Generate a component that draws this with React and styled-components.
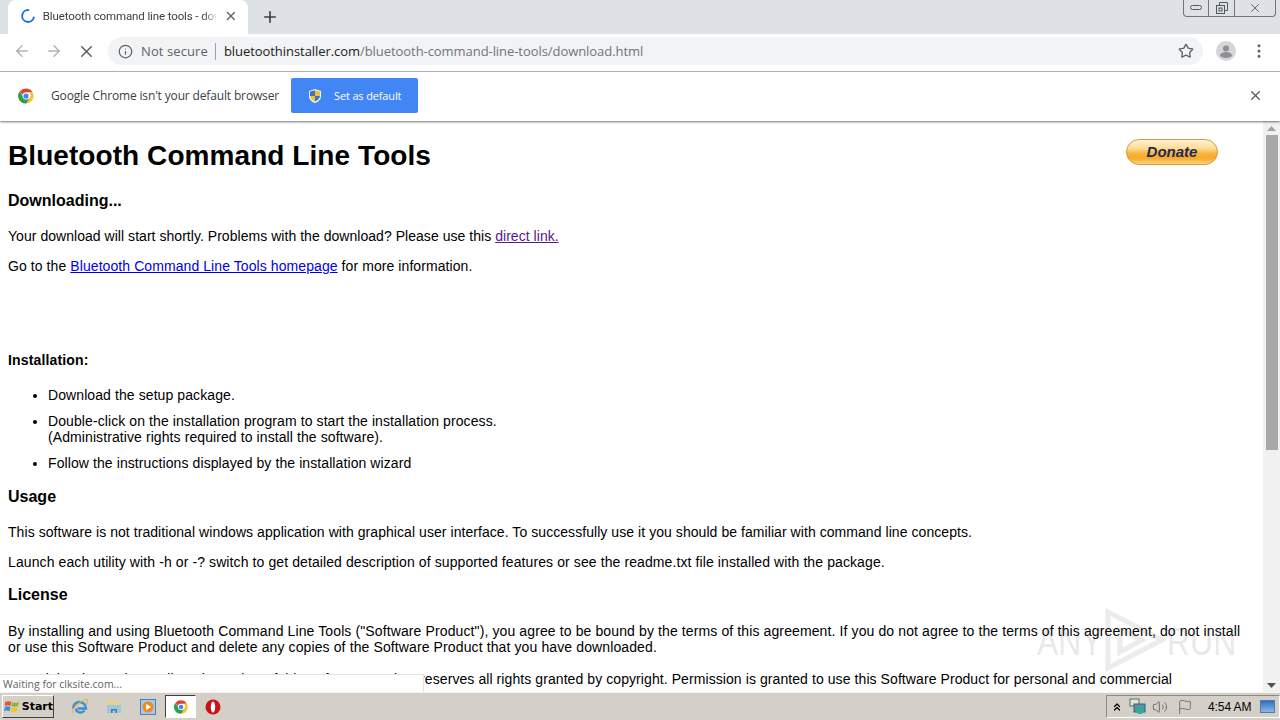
import styled, { createGlobalStyle } from 'styled-components';
import { ArrowLeft, ArrowRight, X, Plus, Info, Star, MoreVertical, Flag, ChevronsUp, Volume2 } from 'lucide-react';

const GlobalStyle = createGlobalStyle`
  html, body {
    margin: 0;
    padding: 0;
    width: 1280px;
    height: 720px;
    overflow: hidden;
    background: #fff;
    font-family: "Liberation Sans", Arial, sans-serif;
  }
`;

const Shell = styled.div`
  width: 1280px;
  height: 720px;
  display: flex;
  flex-direction: column;
  position: relative;
  overflow: hidden;
`;

const TabStrip = styled.div`
  height: 34px;
  flex: none;
  background: #dee1e6;
  display: flex;
  align-items: flex-end;
  padding-left: 8px;
`;

const Tab = styled.div`
  width: 240px;
  height: 34px;
  box-sizing: border-box;
  background: #fff;
  border-radius: 8px 8px 0 0;
  display: flex;
  align-items: center;
  padding: 0 10px 2px 12px;
  font-family: Roboto, sans-serif;
  font-size: 11.5px;
  letter-spacing: -0.12px;
  color: #3c4043;
`;

const TabTitle = styled.span`
  width: 176px;
  margin-left: 7px;
  white-space: nowrap;
  overflow: hidden;
  -webkit-mask-image: linear-gradient(to right, #000 160px, transparent 176px);
  mask-image: linear-gradient(to right, #000 160px, transparent 176px);
`;

const TabClose = styled(X)`
  margin-left: 8px;
  color: #5f6368;
`;

const NewTab = styled(Plus)`
  margin: 0 0 8px 13px;
  color: #3c4043;
`;

const WindowControls = styled.div`
  margin: 0 4px auto auto;
  height: 17px;
  width: 93px;
  box-sizing: border-box;
  display: flex;
  border: 1px solid #70757c;
  border-top: none;
  border-radius: 0 0 4px 4px;
`;

const WindowButton = styled.div`
  width: ${(p) => p.$w}px;
  display: flex;
  align-items: center;
  justify-content: center;
  color: #53585f;
  border-right: ${(p) => (p.$last ? 'none' : '1px solid #70757c')};
`;

const Toolbar = styled.div`
  height: 38px;
  flex: none;
  box-sizing: border-box;
  background: #fff;
  border-bottom: 1px solid #b6b8bb;
  display: flex;
  align-items: center;
  padding: 0 12px 3px 6px;
`;

const NavButton = styled.div`
  width: 32px;
  display: flex;
  justify-content: center;
  color: ${(p) => p.$color};
`;

const Omnibox = styled.div`
  width: 1095px;
  height: 28px;
  margin-left: 6px;
  box-sizing: border-box;
  padding: 0 9px 0 10px;
  background: #f1f3f4;
  border-radius: 14px;
  display: flex;
  align-items: center;
  font-family: "Open Sans", sans-serif;
  font-size: 13px;
  letter-spacing: -0.06px;
  white-space: nowrap;
`;

const NotSecure = styled.span`
  color: #5f6368;
  margin-left: 8px;
  padding-right: 7px;
  border-right: 1px solid #9aa0a6;
  line-height: 17px;
  letter-spacing: 0.1px;
`;

const Domain = styled.span`
  margin-left: 8px;
  color: #202124;
`;

const Path = styled.span`
  color: #70757a;
`;

const StarIcon = styled(Star)`
  margin-left: auto;
  color: #5f6368;
`;

const Avatar = styled.svg`
  margin-left: 13px;
  flex: none;
`;

const MenuDots = styled(MoreVertical)`
  margin-left: 14px;
  color: #5f6368;
`;

const InfoBar = styled.div`
  height: 49px;
  flex: none;
  box-sizing: border-box;
  background: #fff;
  display: flex;
  align-items: center;
  padding: 0 17px 2px 17px;
  box-shadow: 0 1px 2px rgba(0, 0, 0, 0.55);
  position: relative;
  z-index: 1;
  font-family: "Open Sans", sans-serif;
  font-size: 12px;
  letter-spacing: -0.15px;
  color: #3c4043;
`;

const InfoText = styled.span`
  margin-left: 16px;
`;

const DefaultButton = styled.div`
  margin-left: 12px;
  width: 127px;
  height: 35px;
  background: #4285f4;
  border-radius: 2px;
  display: flex;
  align-items: center;
  padding-left: 16px;
  box-sizing: border-box;
  color: #fff;
  font-size: 11px;
`;

const DefaultLabel = styled.span`
  margin-left: 11px;
`;

const InfoClose = styled(X)`
  margin-left: auto;
  color: #5f6368;
`;

const Viewport = styled.div`
  flex: 1;
  min-height: 0;
  display: flex;
  position: relative;
  overflow: hidden;
`;

const Page = styled.main`
  flex: 1;
  min-width: 0;
  padding: 0 8px;
  overflow: hidden;
  color: #000;
  font-size: 14px;
`;

const Header = styled.header`
  display: flex;
  justify-content: space-between;
  align-items: flex-start;
  padding: 18px 37px 0 0;
`;

const Title = styled.h1`
  margin: 1px 0 0;
  font-size: 28px;
  line-height: 32px;
  letter-spacing: 0.07px;
`;

const Donate = styled.div`
  width: 92px;
  height: 26px;
  box-sizing: border-box;
  border: 1px solid #d9992f;
  border-radius: 13px;
  background: linear-gradient(#fff3d6 0%, #fedc93 35%, #f9b53f 55%, #f7a928 75%, #fcd27f 100%);
  text-align: center;
  font-size: 15px;
  font-weight: bold;
  font-style: italic;
  line-height: 24px;
  color: #1d2a55;
`;

const Heading = styled.h2`
  margin: ${(p) => p.$top}px 0 0;
  font-size: 16px;
  line-height: 18px;
`;

const Para = styled.p`
  margin: ${(p) => p.$top || 14}px 0 0;
  line-height: 16px;
  letter-spacing: ${(p) => p.$track || 0.08}px;
`;

const Strong = styled.p`
  margin: 78px 0 0;
  font-weight: bold;
  line-height: 16px;
  letter-spacing: 0.15px;
`;

const Steps = styled.ul`
  margin: 19px 0 0;
  padding-left: 40px;
  letter-spacing: 0.09px;
`;

const Step = styled.li`
  line-height: 16px;
  margin-bottom: 10px;
`;

const PageLink = styled.a`
  color: ${(p) => (p.$visited ? '#551a8b' : '#0000ee')};
  text-decoration: underline;
`;

const Scrollbar = styled.div`
  width: 17px;
  flex: none;
  background: #f1f1f1;
  display: flex;
  flex-direction: column;
  align-items: center;
`;

const ScrollArrow = styled.div`
  height: 14px;
  flex: none;
  display: flex;
  align-items: center;
  justify-content: center;
`;

const ScrollThumb = styled.div`
  width: 12px;
  height: 315px;
  background: #a8a8a8;
`;

const ScrollSpace = styled.div`
  flex: 1;
`;

const StatusBubble = styled.div`
  position: absolute;
  left: 0;
  bottom: 0;
  width: 424px;
  height: 18px;
  box-sizing: border-box;
  background: #fff;
  border-top: 1px solid #e3e3e3;
  border-right: 1px solid #e3e3e3;
  padding-left: 3px;
  font-family: "Open Sans", sans-serif;
  font-size: 10.5px;
  line-height: 18px;
  color: #5f6368;
`;

const Watermark = styled.div`
  position: absolute;
  left: 1037px;
  top: 487px;
  width: 196px;
  height: 64px;
  display: flex;
  align-items: center;
  justify-content: space-between;
  font-size: 39px;
  color: rgba(120, 120, 120, 0.16);
  pointer-events: none;
`;

const WatermarkWord = styled.span`
  display: inline-block;
  width: 66px;
  transform: scaleX(0.82);
  transform-origin: left center;
  margin-top: 4px;
`;

const Taskbar = styled.footer`
  height: 28px;
  flex: none;
  box-sizing: border-box;
  background: #d4d0c8;
  border-top: 1px solid #f4f3ef;
  display: flex;
  align-items: center;
  padding-left: 2px;
  font-family: "Liberation Sans", sans-serif;
  font-size: 12px;
  color: #000;
`;

const StartButton = styled.div`
  width: 52px;
  height: 23px;
  box-sizing: border-box;
  border: 1px solid;
  border-color: #fff #404040 #404040 #fff;
  display: flex;
  align-items: center;
  gap: 1px;
  padding-left: 1px;
  font-family: "DejaVu Sans", sans-serif;
  font-size: 11px;
  font-weight: bold;
`;

const Launcher = styled.div`
  width: ${(p) => (p.$active ? 31 : 34)}px;
  height: 23px;
  box-sizing: border-box;
  display: flex;
  align-items: center;
  justify-content: center;
  background: ${(p) => (p.$active ? '#fff' : 'transparent')};
  border: ${(p) => (p.$active ? '1px solid' : 'none')};
  border-color: #404040 #fff #fff #404040;
`;

const LauncherGroup = styled.div`
  margin-left: 9px;
  display: flex;
  align-items: center;
`;

const Tray = styled.div`
  margin-left: auto;
  height: 23px;
  width: 174px;
  box-sizing: border-box;
  border: 1px solid;
  border-color: #8c8a85 #fff #fff #8c8a85;
  display: flex;
  align-items: center;
  padding-left: 2px;
`;

const TrayIcon = styled.div`
  display: flex;
  margin-left: ${(p) => p.$gap}px;
  color: #5d5d5d;
`;

const Clock = styled.span`
  margin-left: 15px;
  width: 42px;
  white-space: nowrap;
  letter-spacing: -0.1px;
`;

const ShowDesktop = styled.div`
  margin-left: 10px;
  width: 15px;
  height: 13px;
  background: linear-gradient(#2f6fc0, #8cb6e6);
  border: 1px solid #4a7cb5;
  box-sizing: border-box;
`;

function ChromeLogo({ size = 18 }) {
  return (
    <svg width={size} height={size} viewBox="0 0 48 48">
      <path d="M24 4a20 20 0 0 1 17.3 10H24a10 10 0 0 0-9.5 6.9L7.7 11.4A20 20 0 0 1 24 4z" fill="#db4437" />
      <path d="M41.3 14A20 20 0 0 1 25 44l8.2-14.8A10 10 0 0 0 32 14z" fill="#fbc02d" />
      <path d="M25 44A20 20 0 0 1 7.7 11.4l8.6 15A10 10 0 0 0 33.2 29.2z" fill="#2e9e4f" />
      <circle cx="24" cy="24" r="9" fill="#fff" />
      <circle cx="24" cy="24" r="7" fill="#4285f4" />
    </svg>
  );
}

function ShieldIcon() {
  return (
    <svg width="16" height="16" viewBox="0 0 16 16">
      <path d="M8 1l6 2v5c0 3.5-2.6 5.8-6 7-3.4-1.200-6-3.500-6-7V3z" fill="#f3f3e6" />
      <path d="M8 2.200V8H3V3.600z" fill="#3f72c8" />
      <path d="M8 8h5c-.2 2.600-2.300 4.400-5 5.600z" fill="#3f72c8" />
      <path d="M8 2.200l5 1.400V8H8z" fill="#f2c230" />
      <path d="M8 8v5.600C5.300 12.400 3.200 10.600 3 8z" fill="#f2c230" />
    </svg>
  );
}

function Spinner() {
  return (
    <svg width="16" height="16" viewBox="0 0 16 16" fill="none">
      <path d="M8.500 2A6 6 0 1 0 14 9.500" stroke="#1a73e8" strokeWidth="2" strokeLinecap="round" />
    </svg>
  );
}

function WindowsFlag() {
  return (
    <svg width="18" height="17" viewBox="0 0 18 17">
      <path d="M1 4c2-1.500 4-1.500 7-.5L7 8C4.500 7 3 7 1 8z" fill="#e8562a" />
      <path d="M9 3.800c2.500 1 4.500 1 7 0L15 8c-2.500 1-4.500 1-7 0z" fill="#7fba3a" />
      <path d="M1 9c2-1 3.500-1 6 0l-1 4.500c-2.500-1-4-1-6 0z" fill="#3d8fdc" />
      <path d="M8 9.200c2.500 1 4.500 1 7 0l-1 4.500c-2.500 1-4.500 1-7 0z" fill="#f5c02c" />
    </svg>
  );
}

function IeIcon() {
  return (
    <svg width="18" height="18" viewBox="0 0 18 18" fill="none">
      <path d="M2 10.500a6.500 6.500 0 0 1 13 0H6.500" stroke="#3a8fd6" strokeWidth="2.400" />
      <path d="M5 10.500c0 4 5.500 5.500 8.500 2" stroke="#3a8fd6" strokeWidth="2.400" />
      <path d="M2 15C0 11 10 2 15.500 1.500c1.500 0 1.500 3-.5 5" stroke="#e0b64a" strokeWidth="1.200" />
    </svg>
  );
}

function FolderIcon() {
  return (
    <svg width="16" height="16" viewBox="0 0 16 16">
      <path d="M2 2h5l1 2h6v3H2z" fill="#f0d070" />
      <path d="M1 6h14v8H1z" fill="#9fc6dc" />
      <path d="M5 14v-4h6v4h-1.500v-2.500h-3V14z" fill="#3f80ae" />
    </svg>
  );
}

function MediaIcon() {
  return (
    <svg width="16" height="16" viewBox="0 0 16 16">
      <rect x="0.500" y="0.500" width="15" height="15" fill="#a9c8e8" stroke="#4a80c0" />
      <circle cx="8" cy="8" r="5.500" fill="#ee8a1c" />
      <path d="M6.200 5l5 3-5 3z" fill="#fff" />
    </svg>
  );
}

function OperaIcon() {
  return (
    <svg width="16" height="16" viewBox="0 0 16 16">
      <circle cx="8" cy="8" r="7.500" fill="#cc1016" />
      <ellipse cx="8" cy="8" rx="2.200" ry="5.500" fill="#fff" />
    </svg>
  );
}

function NetworkIcon() {
  return (
    <svg width="18" height="17" viewBox="0 0 18 17">
      <rect x="1" y="1" width="9" height="7" fill="#dfe8d8" stroke="#5b6b6b" />
      <rect x="5" y="6" width="11" height="8" fill="#5d8fa8" stroke="#3b5f70" />
      <circle cx="11" cy="12" r="4" fill="#35a8a0" />
    </svg>
  );
}

export default function App() {
  return (
    <Shell>
      <GlobalStyle />
      <TabStrip>
        <Tab>
          <Spinner />
          <TabTitle>Bluetooth command line tools - download</TabTitle>
          <TabClose size={14} strokeWidth={2.4} />
        </Tab>
        <NewTab size={18} strokeWidth={2.2} />
        <WindowControls>
          <WindowButton $w={25}>
            <svg width="12" height="6" viewBox="0 0 12 6" fill="none">
              <rect x="0.500" y="0.500" width="11" height="4" rx="2" stroke="currentColor" />
            </svg>
          </WindowButton>
          <WindowButton $w={25}>
            <svg width="12" height="12" viewBox="0 0 12 12" fill="none" stroke="currentColor">
              <rect x="0.500" y="3.500" width="8" height="8" />
              <path d="M3.500 3V.5h8v8H9" />
              <rect x="3" y="6" width="3" height="3" />
            </svg>
          </WindowButton>
          <WindowButton $w={41} $last>
            <X size={14} strokeWidth={1.5} />
          </WindowButton>
        </WindowControls>
      </TabStrip>

      <Toolbar>
        <NavButton $color="#b0b3b8"><ArrowLeft size={18} /></NavButton>
        <NavButton $color="#b0b3b8"><ArrowRight size={18} /></NavButton>
        <NavButton $color="#5f6368"><X size={19} /></NavButton>
        <Omnibox>
          <Info size={15} color="#5f6368" />
          <NotSecure>Not secure</NotSecure>
          <Domain>bluetoothinstaller.com<Path>/bluetooth-command-line-tools/download.html</Path></Domain>
          <StarIcon size={16} />
        </Omnibox>
        <Avatar width="20" height="20" viewBox="0 0 20 20">
          <circle cx="10" cy="10" r="10" fill="#d4d5d7" />
          <circle cx="10" cy="7.500" r="3" fill="#8d8f92" />
          <ellipse cx="10" cy="14" rx="6" ry="3" fill="#8d8f92" />
        </Avatar>
        <MenuDots size={18} />
      </Toolbar>

      <InfoBar>
        <ChromeLogo />
        <InfoText>Google Chrome isn't your default browser</InfoText>
        <DefaultButton>
          <ShieldIcon />
          <DefaultLabel>Set as default</DefaultLabel>
        </DefaultButton>
        <InfoClose size={15} strokeWidth={2.4} />
      </InfoBar>

      <Viewport>
        <Page>
          <Header>
            <Title>Bluetooth Command Line Tools</Title>
            <Donate>Donate</Donate>
          </Header>
          <Heading $top={20}>Downloading...</Heading>
          <Para $top={18} $track={0.04}>
            Your download will start shortly. Problems with the download? Please use this{' '}
            <PageLink $visited href="#">direct link.</PageLink>
          </Para>
          <Para>
            Go to the <PageLink href="#">Bluetooth Command Line Tools homepage</PageLink> for more information.
          </Para>
          <Strong>Installation:</Strong>
          <Steps>
            <Step>Download the setup package.</Step>
            <Step>
              Double-click on the installation program to start the installation process.
              <br />
              (Administrative rights required to install the software).
            </Step>
            <Step>Follow the instructions displayed by the installation wizard</Step>
          </Steps>
          <Heading $top={17}>Usage</Heading>
          <Para $top={18} $track={0.06}>
            This software is not traditional windows application with graphical user interface. To successfully use it you should be familiar with command line concepts.
          </Para>
          <Para $track={0.1}>
            Launch each utility with -h or -? switch to get detailed description of supported features or see the readme.txt file installed with the package.
          </Para>
          <Heading $top={16}>License</Heading>
          <Para $top={19} $track={0.115}>
            By installing and using Bluetooth Command Line Tools ("Software Product"), you agree to be bound by the terms of this agreement. If you do not agree to the terms of this agreement, do not install or use this Software Product and delete any copies of the Software Product that you have downloaded.
          </Para>
          <Para $top={16}>
            Copyright Bluetooth Installer. The author of this Software Product reserves all rights granted by copyright. Permission is granted to use this Software Product for personal and commercial
          </Para>
        </Page>
        <Scrollbar>
          <ScrollArrow>
            <svg width="9" height="5" viewBox="0 0 9 5"><path d="M0 5l4.500-5L9 5z" fill="#a3a3a3" /></svg>
          </ScrollArrow>
          <ScrollThumb />
          <ScrollSpace />
          <ScrollArrow>
            <svg width="9" height="5" viewBox="0 0 9 5"><path d="M0 0l4.500 5L9 0z" fill="#505050" /></svg>
          </ScrollArrow>
        </Scrollbar>
        <StatusBubble>Waiting for clksite.com...</StatusBubble>
        <Watermark>
          <WatermarkWord>ANY</WatermarkWord>
          <svg width="62" height="64" viewBox="0 0 62 64" fill="none" stroke="rgba(120,120,120,0.14)" strokeWidth="5">
            <path d="M4 4l54 28L4 60z" />
            <path d="M16 22l22 10-22 12z" />
          </svg>
          <WatermarkWord>RUN</WatermarkWord>
        </Watermark>
      </Viewport>

      <Taskbar>
        <StartButton>
          <WindowsFlag />
          Start
        </StartButton>
        <LauncherGroup>
          <Launcher><IeIcon /></Launcher>
          <Launcher><FolderIcon /></Launcher>
          <Launcher><MediaIcon /></Launcher>
          <Launcher $active><ChromeLogo size={16} /></Launcher>
          <Launcher><OperaIcon /></Launcher>
        </LauncherGroup>
        <Tray>
          <TrayIcon $gap={2}><ChevronsUp size={12} color="#000" strokeWidth={2.4} /></TrayIcon>
          <TrayIcon $gap={6}><NetworkIcon /></TrayIcon>
          <TrayIcon $gap={5}><Volume2 size={16} strokeWidth={1.3} /></TrayIcon>
          <TrayIcon $gap={9}><Flag size={16} strokeWidth={1.2} /></TrayIcon>
          <Clock>4:54 AM</Clock>
          <ShowDesktop />
        </Tray>
      </Taskbar>
    </Shell>
  );
}
